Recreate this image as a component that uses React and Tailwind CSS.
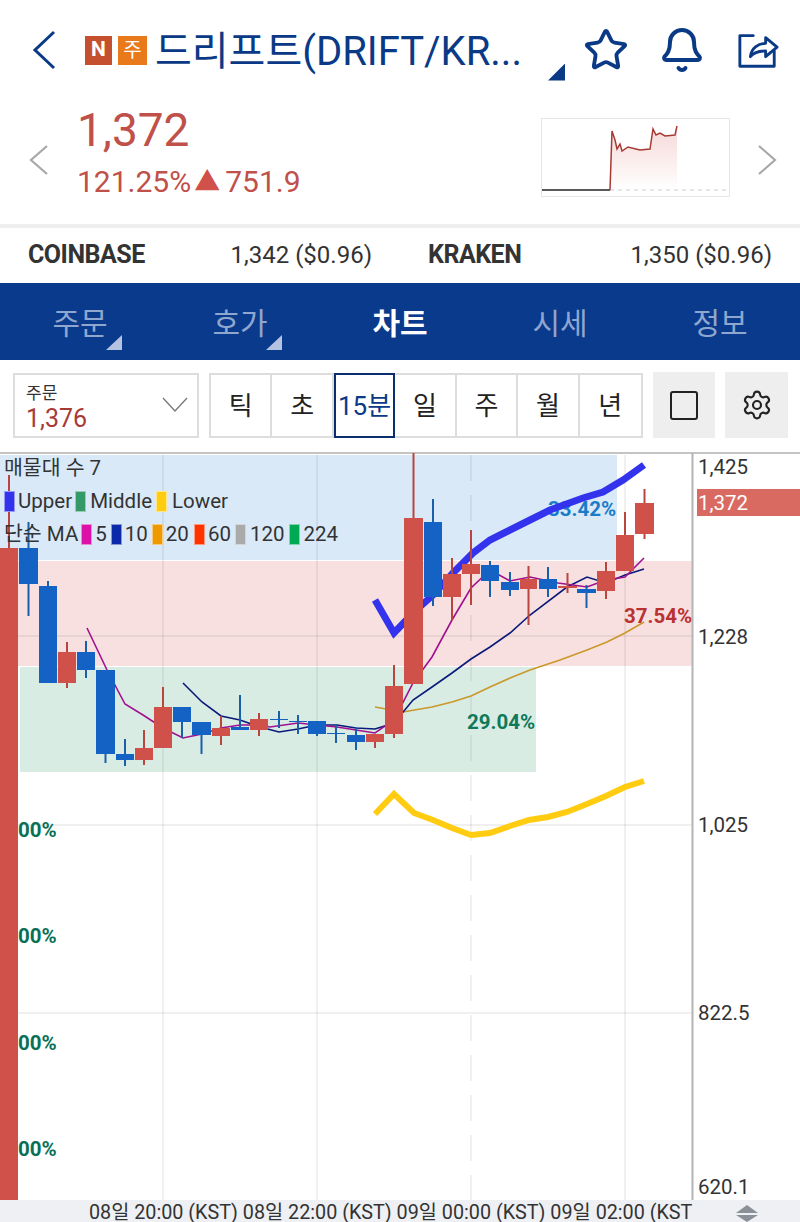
import { Star, Bell, Settings } from "lucide-react";

const RED = "#d0504a";
const BLUE = "#1462c4";

// [left, right, bodyTop, bodyBottom, wickTop, wickBottom, up]
const candles = [
  [0, 18, 548, 1200, 475, 548, 1],
  [19, 38, 548, 584, 522, 616, 0],
  [39, 57, 586, 683, 581, 683, 0],
  [58, 76, 652, 683, 642, 688, 1],
  [77, 95, 652, 670, 641, 678, 0],
  [96, 115, 670, 754, 670, 763, 0],
  [116, 134, 754, 760, 739, 766, 0],
  [135, 153, 748, 760, 730, 765, 1],
  [154, 172, 707, 748, 687, 748, 1],
  [173, 191, 707, 722, 707, 738, 0],
  [192, 211, 722, 735, 722, 754, 0],
  [212, 230, 728, 736, 716, 745, 1],
  [231, 249, 727, 730, 695, 730, 0],
  [250, 268, 719, 730, 713, 736, 1],
  [270, 288, 719, 720, 711, 728, 0],
  [289, 307, 721, 722, 715, 734, 0],
  [308, 326, 721, 734, 721, 736, 0],
  [327, 345, 733, 734, 725, 743, 0],
  [347, 365, 735, 742, 727, 750, 0],
  [366, 384, 734, 742, 734, 748, 1],
  [385, 403, 686, 734, 665, 738, 1],
  [404, 423, 518, 684, 453, 684, 1],
  [424, 442, 522, 597, 499, 606, 0],
  [443, 461, 574, 597, 558, 620, 1],
  [462, 480, 564, 574, 530, 605, 1],
  [481, 499, 565, 581, 561, 597, 0],
  [501, 519, 582, 590, 572, 596, 0],
  [520, 537, 579, 589, 566, 625, 1],
  [539, 557, 579, 589, 567, 597, 0],
  [558, 577, 586, 588, 573, 593, 1],
  [577, 596, 589, 593, 585, 608, 0],
  [597, 615, 571, 591, 562, 599, 1],
  [616, 634, 535, 571, 512, 571, 1],
  [635, 654, 503, 534, 489, 539, 1],
];

const upper = "375,600 394,633 414,612 433,595 453,573 473,553 490,540 530,520 550,510 583,498 603,492 623,480 644,465";
const lower = "375,814 394,794 414,813 433,820 452,828 471,835 490,833 510,826 529,820 548,817 567,812 587,804 606,796 625,787 644,781";
const ma5 = "87,628 107,670 125,704 143,715 163,728 183,738 202,734 221,728 240,725 260,725 270,727 298,723 317,725 337,727 356,730 375,733 394,720 413,683 432,657 452,620 471,588 490,570 510,581 530,577 558,583 587,587 606,580 625,577 644,558";
const ma10 = "183,683 202,702 221,716 240,720 260,727 279,732 298,729 317,725 337,725 356,728 375,729 394,723 413,700 432,687 452,673 471,659 490,647 510,633 530,615 567,587 587,577 606,583 625,575 644,569";
const ma20 = "375,707 403,712 432,707 452,702 471,696 490,687 510,678 530,670 560,660 587,650 607,642 625,633 644,622";

const spark = "612,131 615,140 617,149 620,144 622,151 628,147 640,150 650,149 653,129 656,135 660,133 665,136 675,135 677,126";

const tabs = [
  { label: "주문", corner: true },
  { label: "호가", corner: true },
  { label: "차트", active: true },
  { label: "시세" },
  { label: "정보" },
];
const periods = ["틱", "초", "15분", "일", "주", "월", "년"];

function Swatch({ className }) {
  return <span className={`inline-block w-[11px] h-[21px] border border-white/50 ${className}`} />;
}

function Chevron({ points, color, width = 3, className }) {
  return (
    <svg width="24" height="40" viewBox="0 0 24 40" fill="none" stroke={color} strokeWidth={width} className={className}>
      <polyline points={points} />
    </svg>
  );
}

function ShareIcon() {
  return (
    <svg width="42" height="40" viewBox="0 0 44 40" fill="none" stroke="#0a3a86" strokeWidth="3" strokeLinejoin="round" strokeLinecap="round" className="ml-[31px] shrink-0">
      <path d="M17 5H3v32h36V21" />
      <path d="M14 27c1-9 8-14 16-14V7l12 10-12 10v-6c-7 0-12 1-16 6z" />
    </svg>
  );
}

function Chart() {
  return (
    <svg width="800" height="748" viewBox="0 452 800 748" className="block">
      <rect x="0" y="455" width="617" height="105" fill="#d9e9f8" />
      <rect x="18" y="561" width="674" height="105" fill="#f8e0e0" />
      <rect x="20" y="667" width="516" height="105" fill="#d9ece4" />

      {[163, 317, 625].map((x) => (
        <line key={x} x1={x} y1="455" x2={x} y2="1200" stroke="#000" strokeOpacity="0.08" strokeWidth="1.5" />
      ))}
      <line x1="471" y1="455" x2="471" y2="1200" stroke="#000" strokeOpacity="0.08" strokeWidth="1.5" strokeDasharray="26 14" />
      {[636, 825, 1013].map((y) => (
        <line key={y} x1="18" y1={y} x2="692" y2={y} stroke="#000" strokeOpacity="0.08" strokeWidth="1.5" />
      ))}
      <line x1="0" y1="453" x2="800" y2="453" stroke="#c4c4c4" strokeWidth="2" />
      <line x1="692.5" y1="453" x2="692.5" y2="1200" stroke="#b4b4b4" strokeWidth="2" />

      <g fontWeight="700" fontSize="20.5">
        <text x="548" y="516" fill="#1a7cc8">33.42%</text>
        <text x="624" y="623" fill="#b83232">37.54%</text>
        <text x="467" y="729" fill="#0f7a5a">29.04%</text>
        {[837, 943, 1050, 1156].map((y) => (
          <text key={y} x="18" y={y} fill="#0a7055">00%</text>
        ))}
      </g>

      <polyline points={upper} fill="none" stroke="#3333ee" strokeWidth="7" />
      <polyline points={lower} fill="none" stroke="#ffcc11" strokeWidth="6" />
      <polyline points={ma20} fill="none" stroke="#c9982a" strokeWidth="1.6" />
      <polyline points={ma10} fill="none" stroke="#0a1a7a" strokeWidth="1.6" />
      <polyline points={ma5} fill="none" stroke="#a0108f" strokeWidth="1.6" />

      {candles.map(([l, r, t, b, wt, wb, up]) => {
        const mid = (l + r) / 2;
        return (
          <g key={l}>
            <line x1={mid} y1={wt} x2={mid} y2={wb} stroke={up ? "#b8463f" : "#1a5fa8"} strokeWidth="2" />
            <rect x={l} y={t} width={r - l} height={b - t} fill={up ? RED : BLUE} />
          </g>
        );
      })}

      <g fontSize="20.5" fill="#333">
        <text x="698" y="474">1,425</text>
        <text x="698" y="644">1,228</text>
        <text x="698" y="832">1,025</text>
        <text x="698" y="1020">822.5</text>
        <text x="698" y="1194">620.1</text>
      </g>
      <rect x="697" y="489" width="103" height="27" fill="#d96a62" />
      <text x="698" y="510" fontSize="20.5" fill="#fff">1,372</text>
    </svg>
  );
}

export default function App() {
  return (
    <div className="w-[800px] h-[1222px] overflow-hidden bg-white flex flex-col font-[Roboto,'Noto_Sans_CJK_KR',sans-serif]">
      {/* Header */}
      <div className="h-[100px] flex items-center pl-[32px] text-[#0a3a86]">
        <Chevron points="22,2 3,20 22,38" color="#0a3a86" className="shrink-0" />
        <span className="ml-[29px] w-[27px] h-[29px] bg-[#c4502f] text-white text-[21px] font-bold flex items-center justify-center shrink-0">N</span>
        <span className="ml-[6px] w-[29px] h-[29px] bg-[#e87a1c] text-white text-[20px] flex items-center justify-center shrink-0">주</span>
        <span className="ml-[8px] mt-[4px] w-[367px] shrink-0 text-[40px] leading-[50px] whitespace-nowrap">드리프트(DRIFT/KR...</span>
        <span className="ml-[26px] mt-[44px] w-[17px] h-[17px] bg-[#0a3a86] shrink-0 [clip-path:polygon(100%_0,100%_100%,0_100%)]" />
        <Star size={46} strokeWidth={2} className="ml-[18px] shrink-0" />
        <Bell size={48} strokeWidth={2} className="ml-[29px] shrink-0" />
        <ShareIcon />
      </div>

      {/* Price */}
      <div className="h-[128px] flex items-center pl-[26px] border-b-4 border-[#eeeeee]">
        <Chevron points="21,6 5,20 21,34" color="#a8a8a8" width={2.2} className="shrink-0 -mt-[4px]" />
        <div className="ml-[27px] mb-[22px] w-[464px] text-[#c0504a]">
          <div className="text-[46px] leading-[56px]">1,372</div>
          <div className="text-[30px] leading-[36px] mt-[6px] flex items-center">
            121.25%<span className="ml-[3px] mr-[5px] text-[#d0504a] text-[26px]">▲</span>751.9
          </div>
        </div>
        <div className="w-[189px] h-[79px] border border-[#e6e6e6] shrink-0 -mt-[9px]">
          <svg width="187" height="77" viewBox="542 119 187 77" className="block">
            <defs>
              <linearGradient id="sparkFill" x1="0" y1="0" x2="0" y2="1">
                <stop offset="0" stopColor="#d0504a" stopOpacity="0.22" />
                <stop offset="1" stopColor="#d0504a" stopOpacity="0" />
              </linearGradient>
            </defs>
            <polygon points={`610,190 ${spark} 677,190`} fill="url(#sparkFill)" />
            <line x1="610" y1="190" x2="729" y2="190" stroke="#ccc" strokeDasharray="4 4" />
            <line x1="542" y1="190" x2="610" y2="190" stroke="#222" strokeWidth="1.5" />
            <polyline points={`610,190 ${spark}`} fill="none" stroke="#a83a34" strokeWidth="1.5" />
          </svg>
        </div>
        <Chevron points="3,6 19,20 3,34" color="#a8a8a8" width={2.2} className="shrink-0 ml-[26px] -mt-[4px]" />
      </div>

      {/* Exchanges */}
      <div className="h-[55px] pb-[2px] flex items-center text-[#333]">
        <div className="w-[400px] pl-[28px] pr-[28px] flex items-center justify-between">
          <b className="text-[25px] tracking-[-0.5px]">COINBASE</b>
          <span className="text-[24px]">1,342 ($0.96)</span>
        </div>
        <div className="w-[400px] pl-[28px] pr-[28px] flex items-center justify-between">
          <b className="text-[25px] tracking-[-0.5px]">KRAKEN</b>
          <span className="text-[24px]">1,350 ($0.96)</span>
        </div>
      </div>

      {/* Tabs */}
      <div className="h-[77px] bg-[#0a3a8c] grid grid-cols-5 text-[30px]">
        {tabs.map((t) => (
          <div key={t.label} className={`relative flex items-center justify-center pt-[3px] ${t.active ? "text-white font-bold" : "text-[#8fa6cf]"}`}>
            {t.label}
            {t.corner && <span className="absolute left-[106px] top-[52px] w-[16px] h-[15px] bg-[#b4c3e0] [clip-path:polygon(100%_0,100%_100%,0_100%)]" />}
          </div>
        ))}
      </div>

      {/* Toolbar */}
      <div className="h-[92px] flex items-center pl-[13px] -mt-[1px]">
        <div className="w-[186px] h-[65px] border-2 border-[#dddddd] flex items-center justify-between pl-[11px] pr-[9px]">
          <div className="pt-[5px]">
            <div className="text-[17px] leading-[22px] text-[#333]">주문</div>
            <div className="text-[25px] leading-[30px] text-[#a83a34]">1,376</div>
          </div>
          <svg width="26" height="16" viewBox="0 0 26 16" fill="none" stroke="#777" strokeWidth="1.3">
            <polyline points="1,1 13,14 25,1" />
          </svg>
        </div>
        <div className="ml-[10px] w-[434px] h-[65px] border-2 border-[#dddddd] grid grid-cols-7 text-[26px] text-[#222]">
          {periods.map((p) => (
            <div
              key={p}
              className={
                p === "15분"
                  ? "flex items-center justify-center pt-[3px] border-2 border-[#0a2e6e] text-[#0a3a86] -my-[2px]"
                  : "flex items-center justify-center pt-[3px] border-r-2 border-[#dddddd] last:border-r-0"
              }
            >
              {p}
            </div>
          ))}
        </div>
        <div className="ml-[10px] w-[62px] h-[66px] bg-[#eeeeee] flex items-center justify-center">
          <span className="w-[28px] h-[29px] border-2 border-[#222] rounded-[3px]" />
        </div>
        <div className="ml-[10px] w-[63px] h-[66px] bg-[#eeeeee] flex items-center justify-center">
          <Settings size={32} strokeWidth={1.6} className="text-[#222]" />
        </div>
      </div>

      {/* Chart */}
      <div className="relative h-[748px] mt-[1px]">
        <Chart />
        <div className="absolute left-[4px] top-0 text-[20.5px] text-[#333] leading-[33px]">
          <div>매물대 수 7</div>
          <div className="flex items-center">
            <Swatch className="bg-[#3333ee]" />
            <span className="ml-[3px]">Upper</span>
            <Swatch className="ml-[3px] bg-[#339966]" />
            <span className="ml-[4px]">Middle</span>
            <Swatch className="ml-[4px] bg-[#ffcc11]" />
            <span className="ml-[5px]">Lower</span>
          </div>
          <div className="flex items-center">
            <span>단순 MA</span>
            <Swatch className="ml-[3px] bg-[#dd11aa]" />
            <span className="ml-[3px]">5</span>
            <Swatch className="ml-[4px] bg-[#0a2aaa]" />
            <span className="ml-[3px]">10</span>
            <Swatch className="ml-[4px] bg-[#ee9900]" />
            <span className="ml-[3px]">20</span>
            <Swatch className="ml-[5px] bg-[#ff3300]" />
            <span className="ml-[3px]">60</span>
            <Swatch className="ml-[4px] bg-[#aaaaaa]" />
            <span className="ml-[4px]">120</span>
            <Swatch className="ml-[4px] bg-[#00aa55]" />
            <span className="ml-[4px]">224</span>
          </div>
        </div>
      </div>

      {/* Time axis */}
      <div className="relative flex-1 bg-[#eef0f4] overflow-hidden text-[19.75px] text-[#333] leading-[26px] whitespace-nowrap pl-[89px]">
        <span>08일 20:00 (KST) 08일 22:00 (KST) 09일 00:00 (KST) 09일 02:00 (KST</span>
        <span className="absolute left-[736px] top-[5px] w-[22px] h-[8px] bg-[#8a8f98] [clip-path:polygon(50%_0,100%_100%,0_100%)]" />
        <span className="absolute left-[736px] top-[15px] w-[22px] h-[7px] bg-[#8a8f98] [clip-path:polygon(0_0,100%_0,50%_100%)]" />
      </div>
    </div>
  );
}
